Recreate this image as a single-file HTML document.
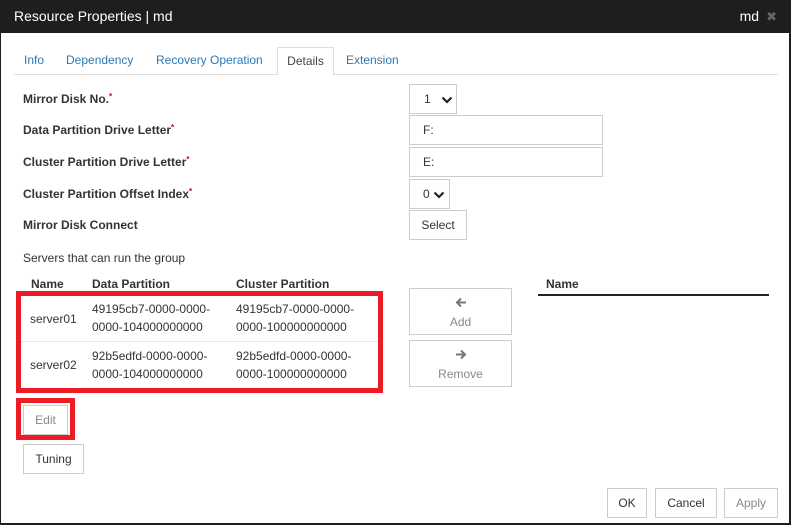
<!DOCTYPE html>
<html><head><meta charset="utf-8"><style>
*{box-sizing:border-box;margin:0;padding:0}
body{width:791px;height:525px;position:relative;background:#fff;font-family:"Liberation Sans",Arial,sans-serif;font-size:12px;color:#333;overflow:hidden}
.a{position:absolute}
#frame{left:0;top:0;width:791px;height:525px;border:1px solid #1e1e1e;border-right-width:2px;border-bottom-width:2px}
#title{left:0;top:0;width:791px;height:33px;background:#1e1e1e;color:#fff;font-size:14px;line-height:33px;padding-left:14px}
#tr{right:14px;top:0;line-height:33px;font-size:14px;color:#fff}
#tr span{color:#666;font-size:13px;margin-left:7px}
.tab{top:47px;height:28px;line-height:27px;color:#2a7ab9;font-size:12px}
#dt{left:277px;width:57px;border:1px solid #ddd;border-bottom:none;background:#fff;color:#444;text-align:center}
#line{left:14px;top:74px;width:764px;height:1px;background:#ddd}
.lab{left:23px;font-weight:bold;color:#333}
.lab b{color:#c00;font-size:8px;vertical-align:top}
.box{border:1px solid #ccc;background:#fff;padding-left:13px;line-height:28px;color:#333}
.th{top:277px;font-weight:bold}
.td{line-height:18px;color:#333}
.red{border:5px solid #ed1c24}
.btn{border:1px solid #ccc;background:#fff;text-align:center;color:#333}
.dis{color:#888}
</style></head><body>
<div class="a" id="frame"></div>
<div class="a" id="title">Resource Properties | md</div>
<div class="a" id="tr">md<span>✖</span></div>
<div class="a tab" style="left:24px">Info</div>
<div class="a tab" style="left:66px">Dependency</div>
<div class="a tab" style="left:156px">Recovery Operation</div>
<div class="a" id="line"></div>
<div class="a tab" id="dt">Details</div>
<div class="a tab" style="left:346px">Extension</div>

<div class="a lab" style="top:92px">Mirror Disk No.<b>*</b></div>
<div class="a lab" style="top:123px">Data Partition Drive Letter<b>*</b></div>
<div class="a lab" style="top:155px">Cluster Partition Drive Letter<b>*</b></div>
<div class="a lab" style="top:187px">Cluster Partition Offset Index<b>*</b></div>
<div class="a lab" style="top:218px">Mirror Disk Connect</div>

<div class="a box" style="left:409px;top:84px;width:48px;height:30px;padding-left:14px">1 <svg width="12" height="10" style="position:absolute;left:31px;top:10px" viewBox="0 0 12 10"><path d="M1.5 2.5L6 7L10.5 2.5" stroke="#222" stroke-width="2.2" fill="none"/></svg></div>
<div class="a box" style="left:409px;top:115px;width:194px;height:30px">F:</div>
<div class="a box" style="left:409px;top:147px;width:194px;height:30px">E:</div>
<div class="a box" style="left:409px;top:179px;width:41px;height:30px">0<svg width="12" height="10" style="position:absolute;left:23px;top:10px" viewBox="0 0 12 10"><path d="M1.5 2.5L6 7L10.5 2.5" stroke="#222" stroke-width="2.2" fill="none"/></svg></div>
<div class="a btn" style="left:409px;top:210px;width:58px;height:30px;line-height:28px">Select</div>

<div class="a" style="left:23px;top:251px">Servers that can run the group</div>
<div class="a th" style="left:31px">Name</div>
<div class="a th" style="left:92px">Data Partition</div>
<div class="a th" style="left:236px">Cluster Partition</div>

<div class="a red" style="left:16px;top:291px;width:367px;height:102px"></div>
<div class="a" style="left:21px;top:341px;width:357px;height:1px;background:#e6e6e6"></div>
<div class="a td" style="left:30px;top:310px">server01</div>
<div class="a td" style="left:92px;top:300px">49195cb7-0000-0000-<br>0000-104000000000</div>
<div class="a td" style="left:236px;top:300px">49195cb7-0000-0000-<br>0000-100000000000</div>
<div class="a td" style="left:30px;top:356px">server02</div>
<div class="a td" style="left:92px;top:347px">92b5edfd-0000-0000-<br>0000-104000000000</div>
<div class="a td" style="left:236px;top:347px">92b5edfd-0000-0000-<br>0000-100000000000</div>

<div class="a btn dis" style="left:409px;top:288px;width:103px;height:47px;padding-top:8px;line-height:18px"><svg width="12" height="11" viewBox="0 0 12 11" style="display:block;margin:0 auto 5px"><path d="M11 5.5H2M6 1.5L2 5.5L6 9.5" stroke="#777" stroke-width="2" fill="none"/></svg>Add</div>
<div class="a btn dis" style="left:409px;top:340px;width:103px;height:47px;padding-top:8px;line-height:18px"><svg width="12" height="11" viewBox="0 0 12 11" style="display:block;margin:0 auto 5px"><path d="M1 5.5H10M6 1.5L10 5.5L6 9.5" stroke="#777" stroke-width="2" fill="none"/></svg>Remove</div>

<div class="a" style="left:546px;top:277px;font-weight:bold">Name</div>
<div class="a" style="left:538px;top:294px;width:231px;height:2px;background:#222"></div>

<div class="a red" style="left:16px;top:398px;width:59px;height:42px"></div>
<div class="a btn dis" style="left:23px;top:405px;width:45px;height:30px;line-height:29px">Edit</div>
<div class="a btn" style="left:23px;top:444px;width:61px;height:30px;line-height:29px">Tuning</div>

<div class="a btn" style="left:607px;top:488px;width:40px;height:30px;line-height:29px">OK</div>
<div class="a btn" style="left:655px;top:488px;width:62px;height:30px;line-height:29px">Cancel</div>
<div class="a btn dis" style="left:724px;top:488px;width:54px;height:30px;line-height:29px">Apply</div>
</body></html>
